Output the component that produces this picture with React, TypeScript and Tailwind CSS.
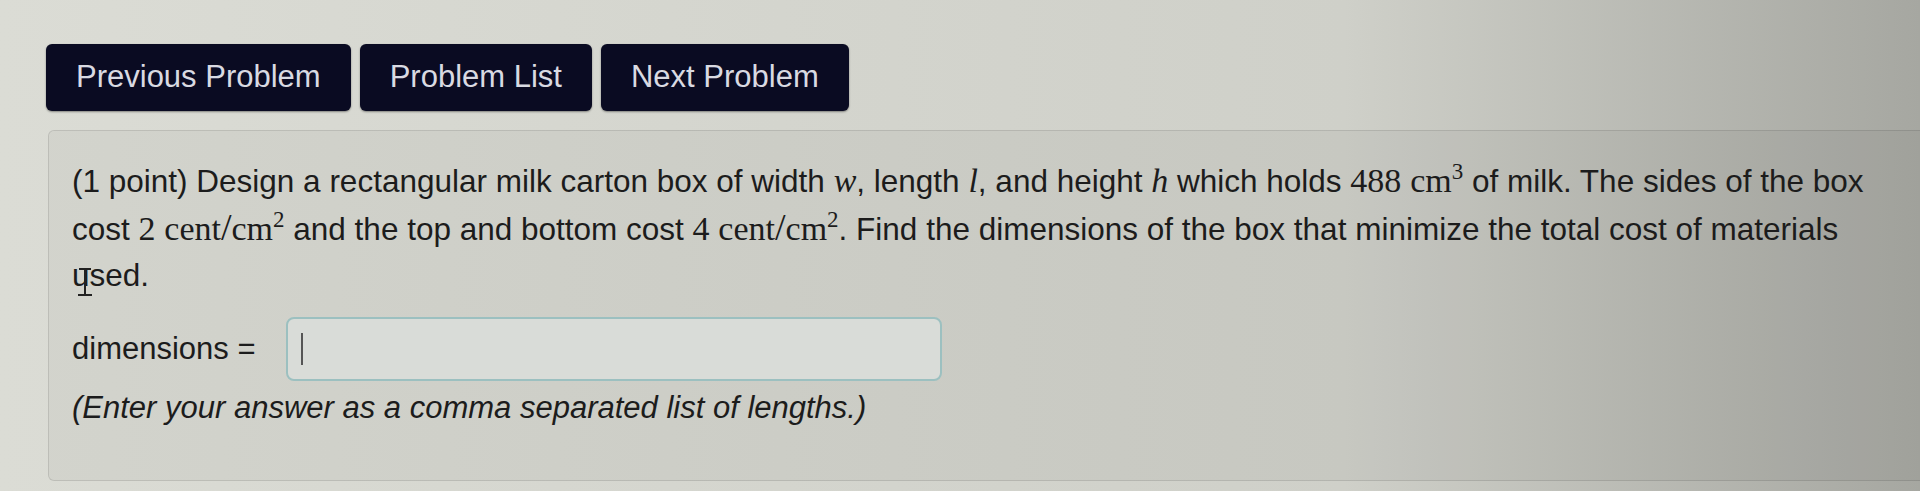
import React from 'react'

const NAV = ['Previous Problem', 'Problem List', 'Next Problem']

function M({ children, italic }: { children: React.ReactNode; italic?: boolean }) {
  return (
    <span className={`font-['Liberation_Serif','Times_New_Roman',serif] text-[34px] ${italic ? 'italic' : ''}`}>
      {children}
    </span>
  )
}

function Sup({ children }: { children: React.ReactNode }) {
  return <span className="relative -top-[13px] text-[23px]">{children}</span>
}

function Unit({ pow }: { pow: string }) {
  return (
    <M>
      cent<span className="text-[38px] font-light">/</span>cm<Sup>{pow}</Sup>
    </M>
  )
}

export default function App() {
  return (
    <div className="relative h-[491px] w-[1920px] overflow-hidden bg-linear-to-r from-[#dbdcd5] via-[#cfd0c9] via-70% to-[#a6a7a1] font-['Liberation_Sans',Arial,sans-serif] text-[#1c1c1c]">
      <div className="flex gap-[9px] pl-[46px] pt-[44px]">
        {NAV.map(label => (
          <button
            key={label}
            className="flex h-[67px] items-center rounded-[6px] bg-[#0a0b22] px-[30px] text-[31px] text-[#d9dae2] shadow-[0_1px_2px_rgba(0,0,0,0.4)]"
          >
            {label}
          </button>
        ))}
      </div>

      <div className="mt-[19px] ml-[48px] h-[351px] w-[1890px] rounded-l-[6px] border border-black/10 bg-black/[0.035] pl-[23px] pt-[28px]">
        <p className="w-[1823px] text-[31.5px] leading-[43px]">
          <span>(1 point) Design a rectangular milk carton box of width </span><M italic>w</M>
          <span>, length </span><M italic>l</M><span>, and height </span><M italic>h</M>
          <span> which holds </span><M>488</M> <M>cm<Sup>3</Sup></M>
          <span> of milk. The sides of the box</span> <span>cost </span><M>2</M> <Unit pow="2" />
          <span> and the top and bottom cost </span><M>4</M> <Unit pow="2" />
          <span>. Find the dimensions of the box that minimize the total cost of materials</span> <span>used.</span>
        </p>

        <div className="mt-[20px] flex items-center gap-[30px]">
          <span className="text-[31px]">dimensions =</span>
          <div className="flex h-[64px] w-[656px] items-center rounded-[8px] border-2 border-[#9cc0c0] bg-[#d9dcd8] pl-[13px]">
            <div className="h-[32px] w-[2px] bg-[#555]" />
          </div>
        </div>

        <p className="mt-[5px] text-[31px] italic leading-[43px]">
          (Enter your answer as a comma separated list of lengths.)
        </p>
      </div>

      {/* mouse I-beam over the text */}
      <svg className="absolute left-[74px] top-[268px]" width="22" height="28" viewBox="0 0 22 28">
        <path d="M5 1h12M11 1v26M4 27h14" stroke="#222" strokeWidth="2" fill="none" />
      </svg>
    </div>
  )
}
